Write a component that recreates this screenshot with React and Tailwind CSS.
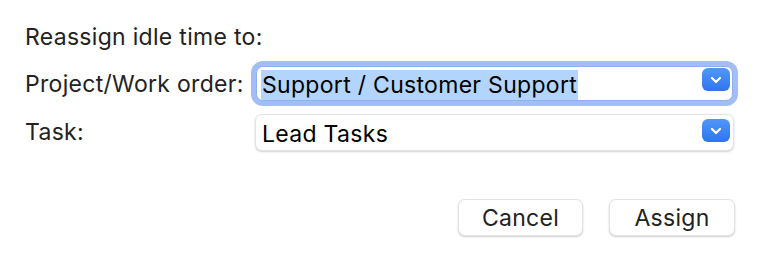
import React from "react";

function Chevron() {
  return (
    <svg width="12" height="8" viewBox="0 0 12 8" fill="none">
      <path d="M2 2 L6 6 L10 2" stroke="white" strokeWidth="2.2" strokeLinecap="round" strokeLinejoin="round" />
    </svg>
  );
}

function ChevBtn() {
  return (
    <div className="w-[28px] h-[23px] rounded-[6px] bg-gradient-to-b from-[#5197f8] to-[#2f74f0] flex items-center justify-center">
      <Chevron />
    </div>
  );
}

export default function App() {
  return (
    <div
      className="w-[768px] h-[272px] bg-white text-[#222222] relative overflow-hidden"
      style={{ fontFamily: "Inter, 'Liberation Sans', sans-serif" }}
    >
      <div className="pl-[25px] pt-[23px] text-[23px] leading-[28px] tracking-[0.3px]">
        Reassign idle time to:
      </div>
      <div className="flex items-start mt-[15px]">
        <div className="w-[256px] pl-[25px] text-[23px] leading-[36px] tracking-[0.3px]">Project/Work order:</div>
        <div className="w-[477px] h-[35px] rounded-[7px] bg-white border border-[#8fb0f0] shadow-[0_0_0_5px_#a3bef6] flex items-start">
          <div className="flex-1 flex items-center h-full pl-[4px] pt-[2px]">
            <span className="bg-[#b3d4fd] text-black text-[23px] leading-[30px] px-[1px] tracking-[0.3px]">
              Support / Customer Support
            </span>
          </div>
          <div className="mt-[1px] mr-[2px]">
            <ChevBtn />
          </div>
        </div>
      </div>
      <div className="flex items-start mt-[12px]">
        <div className="w-[255px] pl-[25px] text-[23px] leading-[36px] tracking-[0.3px]">Task:</div>
        <div className="w-[479px] h-[37px] rounded-[7px] bg-white border border-[#e3e3e3] shadow-[0_1px_2px_rgba(0,0,0,0.18)] flex items-start">
          <div className="flex-1 flex items-center h-full pl-[6px] pt-[3px] text-[23px] text-black tracking-[0.3px]">
            Lead Tasks
          </div>
          <div className="mt-[4px] mr-[3px]">
            <ChevBtn />
          </div>
        </div>
      </div>
      <div className="flex justify-end gap-[26px] pr-[33px] mt-[48px]">
        <div className="w-[125px] h-[37px] pt-[2px] rounded-[7px] bg-white border border-[#e2e2e2] shadow-[0_1px_2px_rgba(0,0,0,0.2)] flex items-center justify-center text-[23px] tracking-[0.3px]">
          Cancel
        </div>
        <div className="w-[126px] h-[37px] pt-[2px] rounded-[7px] bg-white border border-[#e2e2e2] shadow-[0_1px_2px_rgba(0,0,0,0.2)] flex items-center justify-center text-[23px] tracking-[0.3px]">
          Assign
        </div>
      </div>
    </div>
  );
}
